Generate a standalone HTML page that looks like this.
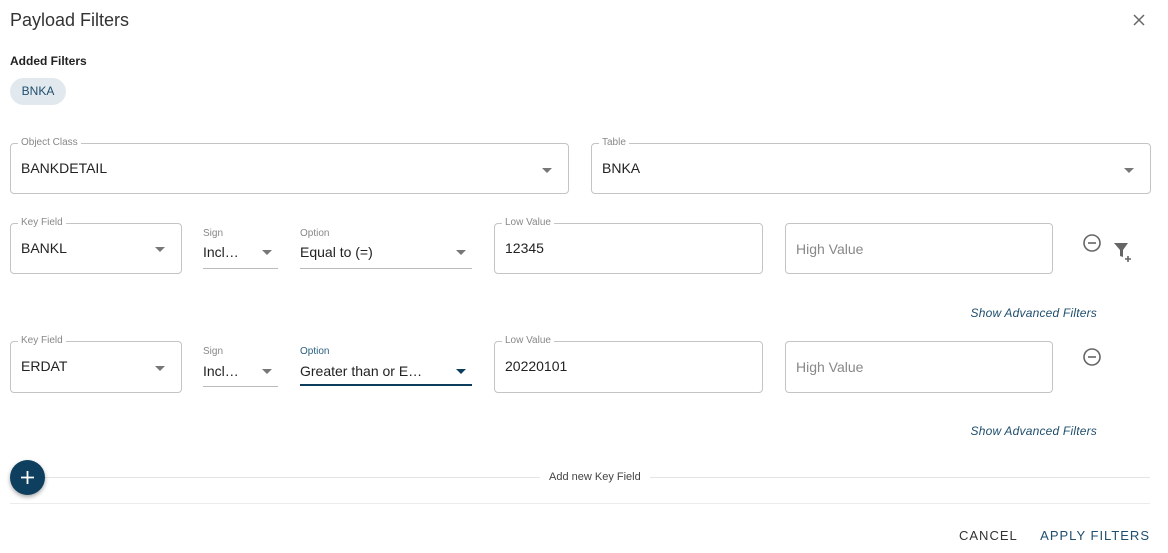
<!DOCTYPE html>
<html><head><meta charset="utf-8"><style>
*{box-sizing:border-box;margin:0;padding:0}
body{width:1168px;height:553px;background:#fff;font-family:"Liberation Sans",Arial,sans-serif;color:#222;position:relative;overflow:hidden}
.a{position:absolute}
.box{position:absolute;border:1px solid #c4c4c4;border-radius:4px}
.lbl{position:absolute;top:-7px;left:7px;background:#fff;padding:0 3px;font-size:10px;color:#888;line-height:12px}
.val{position:absolute;left:10px;font-size:14px;color:#222}
.arr{position:absolute;width:0;height:0;border-left:5px solid transparent;border-right:5px solid transparent;border-top:5px solid #777}
.ul{position:absolute;border-bottom:1px solid #bbb}
.sl{font-size:10px;color:#888}
.adv{position:absolute;right:71px;font-size:12px;font-style:italic;color:#1f4e6e;letter-spacing:0.2px}
</style></head><body>
<div class="a" style="left:10px;top:10px;font-size:18px;color:#333">Payload Filters</div>
<svg class="a" style="left:1133px;top:14px" width="12" height="12" viewBox="0 0 12 12"><path d="M1 1L11 11M11 1L1 11" stroke="#666" stroke-width="1.5"/></svg>
<div class="a" style="left:10px;top:54px;font-size:12px;font-weight:bold">Added Filters</div>
<div class="a" style="left:10px;top:78px;width:56px;height:27px;border-radius:14px;background:#e2e9ee;color:#1f4e6e;font-size:12px;line-height:27px;text-align:center">BNKA</div>

<div class="box" style="left:10px;top:143px;width:559px;height:51px"><span class="lbl">Object Class</span><span class="val" style="top:16px">BANKDETAIL</span><span class="arr" style="left:531px;top:24px"></span></div>
<div class="box" style="left:591px;top:143px;width:560px;height:51px"><span class="lbl">Table</span><span class="val" style="top:16px">BNKA</span><span class="arr" style="left:532px;top:24px"></span></div>

<!-- row 1 -->
<div class="box" style="left:10px;top:223px;width:172px;height:51px"><span class="lbl">Key Field</span><span class="val" style="top:16px">BANKL</span><span class="arr" style="left:144px;top:23px"></span></div>
<div class="a sl" style="left:203px;top:228px">Sign</div>
<div class="a" style="left:203px;top:244px;font-size:14px">Incl…</div>
<div class="arr" style="left:262px;top:250px"></div>
<div class="ul" style="left:203px;top:268px;width:75px"></div>
<div class="a sl" style="left:300px;top:228px">Option</div>
<div class="a" style="left:300px;top:244px;font-size:14px">Equal to (=)</div>
<div class="arr" style="left:456px;top:250px"></div>
<div class="ul" style="left:300px;top:268px;width:172px"></div>
<div class="box" style="left:494px;top:223px;width:269px;height:51px"><span class="lbl">Low Value</span><span class="val" style="top:16px">12345</span></div>
<div class="box" style="left:785px;top:223px;width:268px;height:51px"><span class="val" style="top:17px;color:#888">High Value</span></div>
<svg class="a" style="left:1082px;top:233px" width="20" height="20" viewBox="0 0 20 20"><circle cx="10" cy="10" r="8" fill="none" stroke="#666" stroke-width="1.6"/><path d="M6 10H14" stroke="#666" stroke-width="1.6"/></svg>
<svg class="a" style="left:1113px;top:242px" width="22" height="20" viewBox="0 0 22 20"><path d="M1 1H15L10 8V15L7 14V8Z" fill="#666"/><path d="M15 14V20M12 17H18" stroke="#666" stroke-width="1.6"/></svg>
<div class="adv" style="top:306px">Show Advanced Filters</div>

<!-- row 2 -->
<div class="box" style="left:10px;top:341px;width:172px;height:52px"><span class="lbl">Key Field</span><span class="val" style="top:16px">ERDAT</span><span class="arr" style="left:144px;top:24px"></span></div>
<div class="a sl" style="left:203px;top:346px">Sign</div>
<div class="a" style="left:203px;top:363px;font-size:14px">Incl…</div>
<div class="arr" style="left:262px;top:369px"></div>
<div class="ul" style="left:203px;top:386px;width:75px"></div>
<div class="a sl" style="left:300px;top:346px;color:#2a6080">Option</div>
<div class="a" style="left:300px;top:363px;font-size:14px">Greater than or E…</div>
<div class="arr" style="left:456px;top:369px;border-top-color:#0d3d5c"></div>
<div class="a" style="left:300px;top:384px;width:172px;height:2px;background:#0d3d5c"></div>
<div class="box" style="left:494px;top:341px;width:269px;height:52px"><span class="lbl">Low Value</span><span class="val" style="top:16px">20220101</span></div>
<div class="box" style="left:785px;top:341px;width:268px;height:52px"><span class="val" style="top:17px;color:#888">High Value</span></div>
<svg class="a" style="left:1082px;top:347px" width="20" height="20" viewBox="0 0 20 20"><circle cx="10" cy="10" r="8" fill="none" stroke="#666" stroke-width="1.6"/><path d="M6 10H14" stroke="#666" stroke-width="1.6"/></svg>
<div class="adv" style="top:424px">Show Advanced Filters</div>

<!-- add -->
<div class="a" style="left:34px;top:477px;width:1116px;height:1px;background:#e4e4e4"></div>
<div class="a" style="left:540px;top:471px;padding:0 9px;background:#fff;font-size:11px;color:#444">Add new Key Field</div>
<div class="a" style="left:10px;top:460px;width:35px;height:35px;border-radius:50%;background:#0e3f5e;box-shadow:0 2px 4px rgba(0,0,0,.35)"></div>
<svg class="a" style="left:19px;top:469px" width="17" height="17" viewBox="0 0 17 17"><path d="M8.5 2V15M2 8.5H15" stroke="#fff" stroke-width="1.8"/></svg>
<div class="a" style="left:10px;top:503px;width:1140px;height:1px;background:#ececec"></div>
<div class="a" style="left:959px;top:528px;font-size:13px;letter-spacing:1px;color:#333">CANCEL</div>
<div class="a" style="right:18px;top:528px;font-size:13px;letter-spacing:1px;color:#1f4e6e">APPLY FILTERS</div>
</body></html>
